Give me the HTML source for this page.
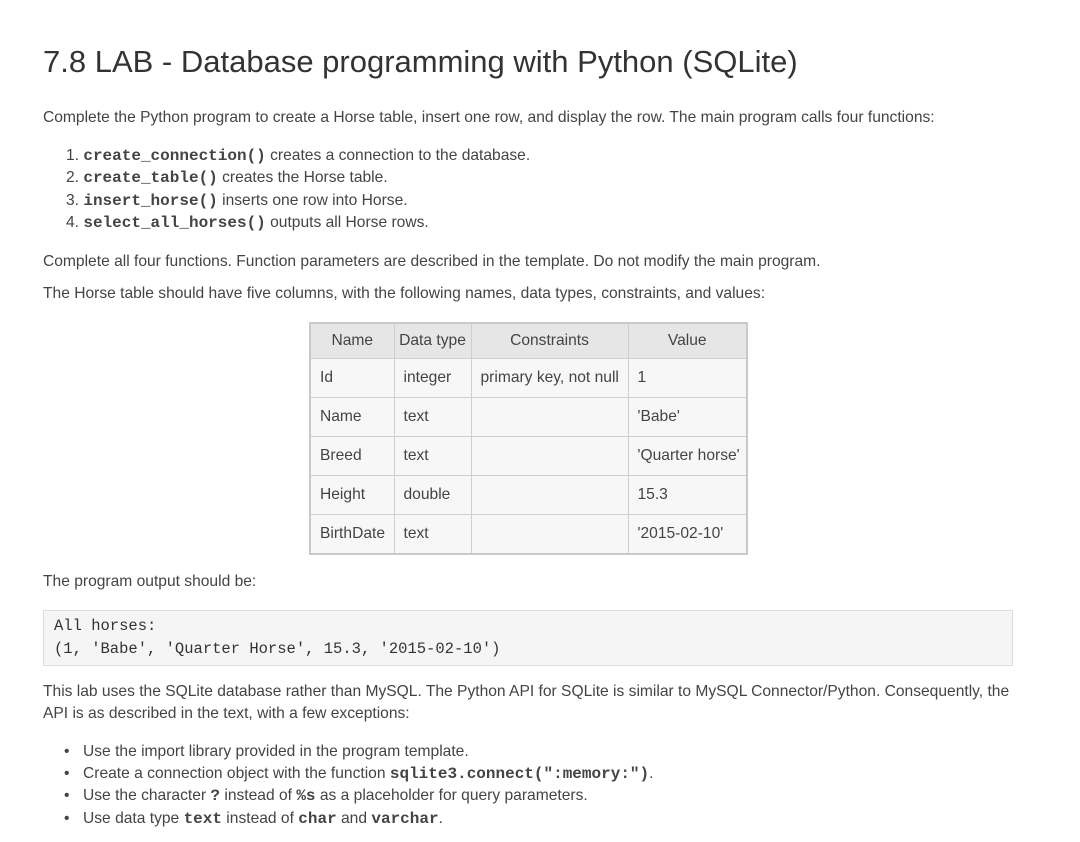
<!DOCTYPE html>
<html><head><meta charset="utf-8"><style>
body{margin:0;width:1080px;height:842px;background:#fff;font-family:"Liberation Sans",sans-serif;color:#444;position:relative;overflow:hidden}
.a{position:absolute;white-space:nowrap;font-size:15.6px;line-height:20px}
code{font-family:"Liberation Mono",monospace;font-weight:bold;color:#444;font-size:16px}
h1{position:absolute;left:43px;top:40px;margin:0;font-weight:normal;font-size:31px;color:#333;line-height:44px}
table{position:absolute;left:309px;top:322px;width:437px;table-layout:fixed;border-collapse:collapse;border:2px solid #c9c9c9;font-size:15.6px;color:#444}
td,th{border:1px solid #cfcfcf;padding:0 0 0 9px;text-align:left;font-weight:normal;background:#f7f7f7;white-space:nowrap;overflow:hidden}
th{background:#e6e6e6;text-align:center;height:34px;padding:0}
td{height:38px}
.pre{position:absolute;left:43px;top:610px;width:968px;height:54px;background:#f5f5f5;border:1px solid #ddd}
.pre div{position:absolute;left:10px;font-family:"Liberation Mono",monospace;font-size:15.5px;color:#333}
.b{position:absolute;left:64px;font-size:15.6px;line-height:20px}
</style></head><body>
<h1>7.8 LAB - Database programming with Python (SQLite)</h1>
<div class="a" style="left:43px;top:108px">Complete the Python program to create a Horse table, insert one row, and display the row. The main program calls four functions:</div>
<div class="a" style="left:66px;top:146px">1. <code>create_connection()</code> creates a connection to the database.</div>
<div class="a" style="left:66px;top:168px">2. <code>create_table()</code> creates the Horse table.</div>
<div class="a" style="left:66px;top:191px">3. <code>insert_horse()</code> inserts one row into Horse.</div>
<div class="a" style="left:66px;top:213px">4. <code>select_all_horses()</code> outputs all Horse rows.</div>
<div class="a" style="left:43px;top:252px">Complete all four functions. Function parameters are described in the template. Do not modify the main program.</div>
<div class="a" style="left:43px;top:284px">The Horse table should have five columns, with the following names, data types, constraints, and values:</div>
<table>
<colgroup><col style="width:84px"><col style="width:77px"><col style="width:157px"><col style="width:119px"></colgroup>
<tr><th>Name</th><th>Data type</th><th>Constraints</th><th>Value</th></tr>
<tr><td>Id</td><td>integer</td><td>primary key, not null</td><td>1</td></tr>
<tr><td>Name</td><td>text</td><td></td><td>'Babe'</td></tr>
<tr><td>Breed</td><td>text</td><td></td><td>'Quarter horse'</td></tr>
<tr><td>Height</td><td>double</td><td></td><td>15.3</td></tr>
<tr><td>BirthDate</td><td>text</td><td></td><td>'2015-02-10'</td></tr>
</table>
<div class="a" style="left:43px;top:572px">The program output should be:</div>
<div class="pre"><div style="top:6px">All horses:</div><div style="top:29px">(1, 'Babe', 'Quarter Horse', 15.3, '2015-02-10')</div></div>
<div class="a" style="left:43px;top:682px">This lab uses the SQLite database rather than MySQL. The Python API for SQLite is similar to MySQL Connector/Python. Consequently, the</div>
<div class="a" style="left:43px;top:704px">API is as described in the text, with a few exceptions:</div>
<div class="b" style="top:742px">•</div><div class="b" style="top:764px">•</div><div class="b" style="top:786px">•</div><div class="b" style="top:809px">•</div>
<div class="a" style="left:83px;top:742px">Use the import library provided in the program template.</div>
<div class="a" style="left:83px;top:764px">Create a connection object with the function <code>sqlite3.connect(":memory:")</code>.</div>
<div class="a" style="left:83px;top:786px">Use the character <code>?</code> instead of <code>%s</code> as a placeholder for query parameters.</div>
<div class="a" style="left:83px;top:809px">Use data type <code>text</code> instead of <code>char</code> and <code>varchar</code>.</div>
</body></html>
